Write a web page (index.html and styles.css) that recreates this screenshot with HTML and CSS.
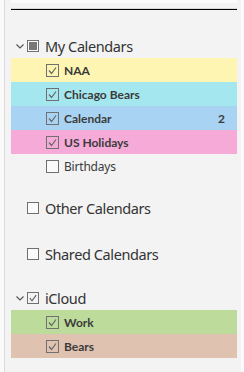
FILE: index.html
```html
<!DOCTYPE html>
<html lang="en">
  <head>
    <meta charset="UTF-8" />
    <meta name="viewport" content="width=device-width, initial-scale=1.0" />
    <title>Calendars</title>
    <link rel="stylesheet" href="styles.css">
  </head>
  <body>
    <div class="frame">
      <div class="list">
        <div class="search"></div>
        <div class="rule"></div>

        <!-- My Calendars -->
        <div class="group first">
          <div class="header">
            <svg class="caret" width="8" height="5" viewBox="0 0 8 5"><path d="M0.5 0.5 L4 4 L7.5 0.5" fill="none" stroke="#555" stroke-width="1.2"/></svg>
            <span class="box mixed"><i></i></span>
            <span class="name">My Calendars</span>
          </div>
          <div class="row yellow">
            <span class="box small checked"><svg width="11" height="11" viewBox="0 0 11 11"><path d="M2 5.5 L4.5 8.5 L9 2.5" fill="none" stroke="#666" stroke-width="1.2"/></svg></span>
            <span class="label">NAA</span>
          </div>
          <div class="row cyan">
            <span class="box small checked"><svg width="11" height="11" viewBox="0 0 11 11"><path d="M2 5.5 L4.5 8.5 L9 2.5" fill="none" stroke="#666" stroke-width="1.2"/></svg></span>
            <span class="label">Chicago Bears</span>
          </div>
          <div class="row blue">
            <span class="box small checked"><svg width="11" height="11" viewBox="0 0 11 11"><path d="M2 5.5 L4.5 8.5 L9 2.5" fill="none" stroke="#666" stroke-width="1.2"/></svg></span>
            <span class="label">Calendar</span>
            <span class="count">2</span>
          </div>
          <div class="row pink">
            <span class="box small checked"><svg width="11" height="11" viewBox="0 0 11 11"><path d="M2 5.5 L4.5 8.5 L9 2.5" fill="none" stroke="#666" stroke-width="1.2"/></svg></span>
            <span class="label">US Holidays</span>
          </div>
          <div class="row">
            <span class="box small"></span>
            <span class="label plain">Birthdays</span>
          </div>
        </div>

        <!-- Other Calendars -->
        <div class="group other">
          <div class="header">
            <span class="caret"></span>
            <span class="box"></span>
            <span class="name">Other Calendars</span>
          </div>
        </div>

        <!-- Shared Calendars -->
        <div class="group shared">
          <div class="header">
            <span class="caret"></span>
            <span class="box"></span>
            <span class="name">Shared Calendars</span>
          </div>
        </div>

        <!-- iCloud -->
        <div class="group">
          <div class="header">
            <svg class="caret" width="8" height="5" viewBox="0 0 8 5"><path d="M0.5 0.5 L4 4 L7.5 0.5" fill="none" stroke="#555" stroke-width="1.2"/></svg>
            <span class="box checked"><svg width="10" height="10" viewBox="0 0 10 10"><path d="M1.8 5 L4 7.8 L8.2 2.2" fill="none" stroke="#666" stroke-width="1.2"/></svg></span>
            <span class="name">iCloud</span>
          </div>
          <div class="row green">
            <span class="box small checked"><svg width="11" height="11" viewBox="0 0 11 11"><path d="M2 5.5 L4.5 8.5 L9 2.5" fill="none" stroke="#666" stroke-width="1.2"/></svg></span>
            <span class="label">Work</span>
          </div>
          <div class="row tan">
            <span class="box small checked"><svg width="11" height="11" viewBox="0 0 11 11"><path d="M2 5.5 L4.5 8.5 L9 2.5" fill="none" stroke="#666" stroke-width="1.2"/></svg></span>
            <span class="label">Bears</span>
          </div>
        </div>
      </div>
    </div>
  </body>
</html>
```

FILE: styles.css
```css
body {
  margin: 0;
  background: #fafafa;
  font-family: "Noto Sans", "Open Sans", sans-serif;
  color: #333;
}
.frame {
  margin-left: 4px;
  width: 236px;
  height: 372px;
  border-left: 1px solid #dcdcdc;
  background: #f3f3f3;
}
.list {
  margin: 0 4px 0 6px;
}
.search {
  height: 3px;
  background: #fbfbfb;
}
.rule {
  margin-top: 5px;
  height: 0;
  border-top: 1px solid #d8d8d8;
  border-bottom: 1px solid #000;
}
.group {
  margin-top: 20px;
}
.group.first {
  margin-top: 24px;
}
.group.other {
  margin-top: 18px;
}
.group.shared {
  margin-top: 22px;
}
.header {
  display: flex;
  align-items: center;
  height: 24px;
  padding-left: 5px;
}
.caret {
  width: 8px;
  margin-right: 3px;
  flex: none;
}
.box {
  box-sizing: border-box;
  width: 12px;
  height: 12px;
  border: 1px solid #707070;
  background: #fafafa;
  display: flex;
  align-items: center;
  justify-content: center;
  flex: none;
}
.box.small {
  width: 13px;
  height: 13px;
}
.box.checked {
  background: transparent;
}
.box.mixed i {
  width: 8px;
  height: 8px;
  background: #777;
}
.name {
  margin-left: 6px;
  font-size: 14.5px;
  letter-spacing: -0.4px;
}
.row {
  display: flex;
  align-items: center;
  height: 24px;
  padding-left: 35px;
  padding-right: 12px;
}
.label {
  margin-left: 5px;
  font-family: Lato, "Noto Sans", sans-serif;
  font-size: 12px;
  font-weight: bold;
  color: #3b3b3b;
}
.label.plain {
  font-family: "Noto Sans", sans-serif;
  font-weight: normal;
  letter-spacing: -0.2px;
}
.count {
  margin-left: auto;
  font-family: Lato, "Noto Sans", sans-serif;
  font-size: 12px;
  font-weight: bold;
  color: #3b3b3b;
}
.yellow { background: #fdf5b1; }
.cyan { background: #a5e7ee; }
.blue { background: #a9d3f3; }
.pink { background: #f5aad8; }
.green { background: #bddb9b; }
.tan { background: #dfc3b0; }
```
